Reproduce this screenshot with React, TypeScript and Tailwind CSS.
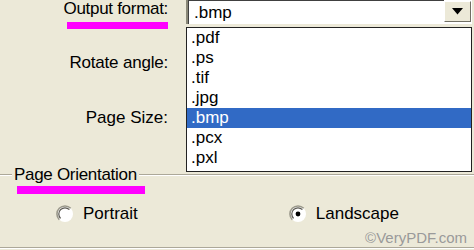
const formats = [".pdf", ".ps", ".tif", ".jpg", ".bmp", ".pcx", ".pxl"];

function Radio({ checked }: { checked?: boolean }) {
  return (
    <svg width="18" height="18" viewBox="0 0 18 18">
      <circle cx="9" cy="9" r="8" fill="#ffffff" />
      <path d="M14.7 3.3 A8 8 0 0 0 3.3 14.7" fill="none" stroke="#9a988a" strokeWidth="1.6" />
      <path d="M13.4 4.6 A6.2 6.2 0 0 0 4.6 13.4" fill="none" stroke="#5a5850" strokeWidth="1.2" />
      {checked && <circle cx="9" cy="9" r="2.4" fill="#000000" />}
    </svg>
  );
}

export default function App() {
  return (
    <div className="relative h-[250px] w-[474px] overflow-hidden bg-[#ECE9D8] font-['Liberation_Sans',Arial,sans-serif] text-[17px] leading-[20px] text-black">
      {/* format settings */}
      <div className="flex h-[165px]">
        <div className="flex w-[168px] flex-col items-end">
          <div className="mt-[-1px] tracking-[-0.3px]">Output format:</div>
          <div className="mt-[3px] h-[7px] w-[101px] bg-[#FF00FF]" />
          <div className="mt-[24px] tracking-[-0.2px]">Rotate angle:</div>
          <div className="mt-[35px]">Page Size:</div>
        </div>
        <div className="ml-[18px] flex-1">
          <div className="mt-[-2px] flex h-[26px] w-[286px] border-t-2 border-l-2 border-t-[#8a8878] border-l-[#8a8878] bg-white">
            <div className="flex flex-1 items-center border-t border-l border-[#404040] pl-[5px] pt-[1px]">
              .bmp
            </div>
            <div className="mt-[1px] mb-[2px] mr-[1px] flex w-[27px] items-center justify-center border border-t-white border-l-white border-r-[#716F64] border-b-[#716F64] bg-[#ECE9D8]">
              <svg width="11" height="7" viewBox="0 0 11 7">
                <path d="M0 0 H11 L5.5 6.5 Z" fill="#000" />
              </svg>
            </div>
          </div>
        </div>
      </div>

      {/* dropdown list */}
      <div className="absolute left-[186px] top-[27px] w-[286px] border border-[#222] bg-white pb-[3px]">
        {formats.map((f) => (
          <div
            key={f}
            className={
              f === ".bmp"
                ? "h-[20px] bg-[#316AC5] pl-[4px] text-white"
                : "h-[20px] pl-[4px]"
            }
          >
            {f}
          </div>
        ))}
      </div>

      {/* page orientation group */}
      <div className="flex items-center">
        <div className="h-[2px] w-[12px] border-t border-b border-t-[#ACA899] border-b-white" />
        <div className="px-[2px] tracking-[-0.3px]">Page Orientation</div>
        <div className="h-[2px] flex-1 border-t border-b border-t-[#ACA899] border-b-white" />
      </div>
      <div className="ml-[17px] mt-[1px] h-[8px] w-[128px] bg-[#FF00FF]" />

      <div className="mt-[10px] flex items-center">
        <div className="ml-[56px] flex">
          <Radio />
        </div>
        <div className="ml-[9px]">Portrait</div>
        <div className="ml-[151px] flex">
          <Radio checked />
        </div>
        <div className="ml-[9px]">Landscape</div>
      </div>

      <div className="mt-[5px] flex justify-end pr-[7px] text-[15px] leading-[18px] text-[#9a9a9a]">
        ©VeryPDF.com
      </div>
      <div className="h-[2px] border-t border-b border-t-[#ACA899] border-b-white" />
    </div>
  );
}
